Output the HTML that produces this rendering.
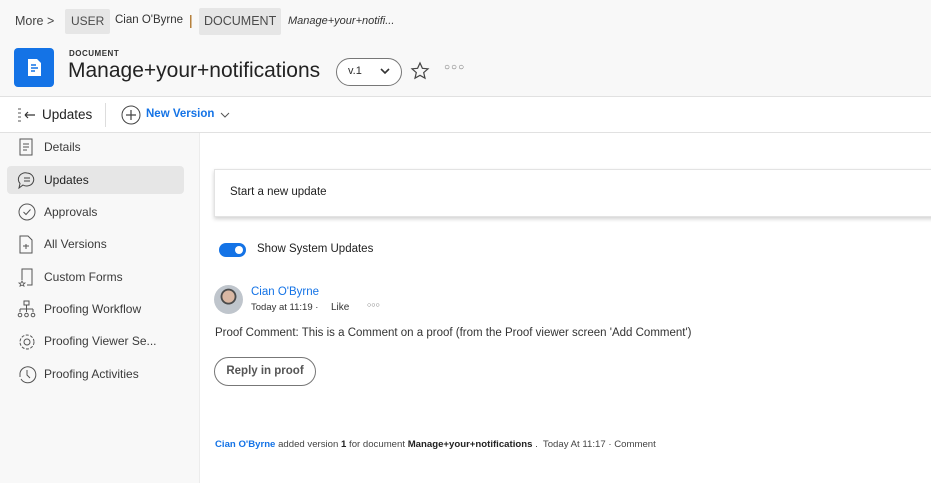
<!DOCTYPE html>
<html><head><meta charset="utf-8"><style>
*{margin:0;padding:0;box-sizing:border-box}
body{width:931px;height:483px;overflow:hidden;font-family:"Liberation Sans",sans-serif;color:#2c2c2c;background:#fff;position:relative;font-size:12px}
.abs{position:absolute}
.top{left:0;top:0;width:931px;height:97px;background:#f8f8f8;border-bottom:1px solid #e1e1e1}
.tag{background:#e6e6e6;border-radius:2px;padding:0 6px;height:25px;line-height:25px;font-size:12px;color:#4b4b4b}
.tool{left:0;top:97px;width:931px;height:36px;background:#fff;border-bottom:1px solid #e1e1e1}
.side{left:0;top:133px;width:200px;height:350px;background:#f8f8f8;border-right:1px solid #ececec}
.item{position:absolute;left:7px;width:177px;height:28px;line-height:28px;padding-left:37px;font-size:12px;color:#3a3a3a;border-radius:4px}
.item svg{position:absolute;left:10px;top:5px}
</style></head><body>
<div class="abs top"></div>
<div class="abs" style="left:15px;top:14px;font-size:12.5px;color:#444">More &gt;</div>
<div class="abs tag" style="left:65px;top:9px">USER</div>
<div class="abs" style="left:115px;top:14px;font-size:11.5px;color:#333">Cian O'Byrne</div>
<div class="abs" style="left:189px;top:12px;font-size:14px;color:#a05a00">|</div>
<div class="abs tag" style="left:199px;top:8px;height:27px;line-height:27px;padding:0 5px;font-size:12.5px">DOCUMENT</div>
<div class="abs" style="left:288px;top:15px;font-size:11px;font-style:italic;color:#333">Manage+your+notifi...</div>
<div class="abs" style="left:14px;top:48px;width:40px;height:39px;background:#1473e6;border-radius:4px">
<svg width="40" height="39"><path d="M14 11h9l4 4v13h-13z" fill="#fff"/><path d="M17 17h5M17 20h7M17 23h4" stroke="#1473e6" stroke-width="1.6"/></svg></div>
<div class="abs" style="left:69px;top:49px;font-size:8px;font-weight:bold;letter-spacing:.5px;color:#333">DOCUMENT</div>
<div class="abs" style="left:68px;top:59px;font-size:21px;color:#222">Manage+your+notifications</div>
<div class="abs" style="left:336px;top:58px;width:66px;height:28px;border:1px solid #777;border-radius:14px;background:#fff"></div>
<div class="abs" style="left:348px;top:65px;font-size:11px">v.1</div>
<svg class="abs" style="left:380px;top:67px" width="10" height="8"><path d="M1 2l4 4 4-4" stroke="#333" stroke-width="1.6" fill="none"/></svg>
<svg class="abs" style="left:410px;top:61px" width="20" height="20"><path d="M10 2l2.4 5.3 5.6.5-4.3 3.8 1.3 5.6L10 14.3 5 17.2l1.3-5.6L2 7.8l5.6-.5z" fill="none" stroke="#444" stroke-width="1.2"/></svg>
<div class="abs" style="left:444px;top:62px;font-size:10px;color:#666;letter-spacing:1px">○○○</div>
<div class="abs tool"></div>
<svg class="abs" style="left:17px;top:107px" width="22" height="16"><path d="M1 2h3M1 6h3M1 10h3M1 14h3" stroke="#555"/><path d="M8 8h10M8 8l3-3M8 8l3 3" stroke="#333" fill="none" stroke-width="1.2"/></svg>
<div class="abs" style="left:42px;top:107px;font-size:13.5px;color:#222">Updates</div>
<div class="abs" style="left:105px;top:103px;width:1px;height:24px;background:#ddd"></div>
<svg class="abs" style="left:121px;top:105px" width="20" height="20"><circle cx="10" cy="10" r="9" fill="none" stroke="#444"/><path d="M10 5v10M5 10h10" stroke="#444" stroke-width="1.2"/></svg>
<div class="abs" style="left:146px;top:108px;font-size:11.5px;font-weight:bold;color:#1473e6">New Version</div>
<svg class="abs" style="left:220px;top:111px" width="10" height="8"><path d="M1 2l4 4 4-4" stroke="#555" fill="none"/></svg>
<div class="abs side"></div>
<div class="item" style="top:133px"><svg width="18" height="18"><rect x="3" y="1" width="12" height="16" fill="none" stroke="#555"/><path d="M6 6h6M6 9h6M6 12h4" stroke="#555"/></svg>Details</div>
<div class="item" style="top:166px;background:#e6e6e6;color:#222"><svg width="20" height="18"><path d="M10 2a7 6.5 0 1 1-4 12l-4 3 1-4.5A7 6.5 0 0 1 10 2z" fill="none" stroke="#444"/><path d="M7 7h6M7 10h6" stroke="#444"/></svg>Updates</div>
<div class="item" style="top:198px"><svg width="20" height="20"><circle cx="10" cy="9" r="8" fill="none" stroke="#555"/><path d="M6.5 9l2.5 2.5 4.5-5" stroke="#555" fill="none"/></svg>Approvals</div>
<div class="item" style="top:230px"><svg width="18" height="20"><path d="M3 1h8l4 4v13H3z" fill="none" stroke="#555"/><path d="M6 11h6M9 9v5" stroke="#555"/></svg>All Versions</div>
<div class="item" style="top:263px"><svg width="20" height="20"><path d="M5 12V1h10v16H10" fill="none" stroke="#555"/><path d="M5 13l1 2h2l-1.5 1.2.5 2-2-1.2-2 1.2.5-2L2 15h2z" fill="none" stroke="#555" stroke-width=".8"/></svg>Custom Forms</div>
<div class="item" style="top:295px"><svg width="20" height="20"><rect x="7" y="1" width="5" height="4" fill="none" stroke="#555"/><path d="M9.5 5v4M3 9h13M3 9v3M9.5 9v3M16 9v3" stroke="#555" fill="none"/><circle cx="3" cy="15" r="1.8" fill="none" stroke="#555"/><circle cx="9.5" cy="15" r="1.8" fill="none" stroke="#555"/><circle cx="16" cy="15" r="1.8" fill="none" stroke="#555"/></svg>Proofing Workflow</div>
<div class="item" style="top:327px"><svg width="20" height="20"><circle cx="10" cy="10" r="3" fill="none" stroke="#555"/><circle cx="10" cy="10" r="7" fill="none" stroke="#555" stroke-dasharray="3 1.5"/></svg>Proofing Viewer Se...</div>
<div class="item" style="top:360px"><svg width="20" height="20"><path d="M4 14A8 8 0 1 0 3 8" fill="none" stroke="#555"/><path d="M10 5v5l3 3" stroke="#555" fill="none"/><path d="M3 8v4" stroke="#555"/></svg>Proofing Activities</div>
<div class="abs" style="left:214px;top:169px;width:730px;height:48px;background:#fff;border:1px solid #e3e3e3;box-shadow:0 2px 4px rgba(0,0,0,.18)"></div>
<div class="abs" style="left:230px;top:186px;font-size:11.5px;color:#222">Start a new update</div>
<div class="abs" style="left:219px;top:243px;width:27px;height:14px;background:#1473e6;border-radius:7px"><div style="position:absolute;right:3px;top:3px;width:8px;height:8px;border-radius:50%;background:#fff"></div></div>
<div class="abs" style="left:257px;top:243px;font-size:11.5px;color:#222">Show System Updates</div>
<div class="abs" style="left:214px;top:285px;width:29px;height:29px;border-radius:50%;background:radial-gradient(circle at 50% 40%,#d9b7a3 0 26%,#4a4a4a 28% 34%,#bfc5cc 36% 100%)"></div>
<div class="abs" style="left:251px;top:286px;font-size:11.5px;color:#1473e6">Cian O'Byrne</div>
<div class="abs" style="left:251px;top:302px;font-size:9.5px;color:#333">Today at 11:19 ·</div>
<div class="abs" style="left:331px;top:302px;font-size:10px;color:#333">Like</div>
<div class="abs" style="left:367px;top:302px;font-size:7px;color:#555">○○○</div>
<div class="abs" style="left:215px;top:327px;font-size:11.5px;color:#333">Proof Comment: This is a Comment on a proof (from the Proof viewer screen 'Add Comment')</div>
<div class="abs" style="left:214px;top:357px;width:102px;height:29px;border:1.5px solid #777;border-radius:15px;text-align:center;line-height:26px;font-size:11.5px;font-weight:bold;color:#555">Reply in proof</div>
<div class="abs" style="left:215px;top:439px;font-size:9.6px;color:#444;white-space:nowrap"><span style="color:#1473e6;font-weight:bold">Cian O'Byrne</span> added version <b style="color:#222">1</b> for document <b style="color:#222">Manage+your+notifications</b> .&nbsp; Today At 11:17 · Comment</div>
</body></html>
